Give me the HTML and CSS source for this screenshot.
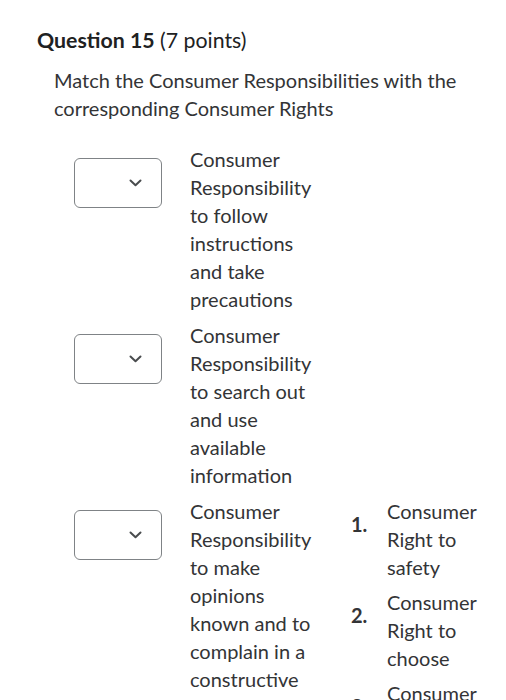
FILE: index.html
```html
<!DOCTYPE html>
<html lang="en">
<head>
<meta charset="utf-8">
<title>Question 15</title>
<link rel="stylesheet" href="styles.css">
</head>
<body>
<div class="page">
  <h2 class="title"><strong>Question 15</strong> (7 points)</h2>
  <p class="prompt">Match the Consumer Responsibilities with the corresponding Consumer Rights</p>
  <div class="match">
    <div class="row r1">
      <div class="select"><svg class="chev" width="13" height="8" viewBox="0 0 13 8"><path d="M1.5 1.5 L6.5 6.2 L11.5 1.5" fill="none" stroke="#494c4e" stroke-width="2" stroke-linecap="round" stroke-linejoin="round"/></svg></div>
      <div class="text">Consumer Responsibility to follow instructions and take precautions</div>
    </div>
    <div class="row r2">
      <div class="select"><svg class="chev" width="13" height="8" viewBox="0 0 13 8"><path d="M1.5 1.5 L6.5 6.2 L11.5 1.5" fill="none" stroke="#494c4e" stroke-width="2" stroke-linecap="round" stroke-linejoin="round"/></svg></div>
      <div class="text">Consumer Responsibility to search out and use available information</div>
    </div>
    <div class="row r3">
      <div class="select"><svg class="chev" width="13" height="8" viewBox="0 0 13 8"><path d="M1.5 1.5 L6.5 6.2 L11.5 1.5" fill="none" stroke="#494c4e" stroke-width="2" stroke-linecap="round" stroke-linejoin="round"/></svg></div>
      <div class="text">Consumer Responsibility to make opinions known and to complain in a constructive way</div>
    </div>
    <ol class="choices">
      <li><span class="num">1.</span><span class="ctext">Consumer Right to safety</span></li>
      <li><span class="num">2.</span><span class="ctext">Consumer Right to choose</span></li>
      <li><span class="num">3.</span><span class="ctext">Consumer Right to be informed</span></li>
      <li><span class="num">4.</span><span class="ctext">Consumer Right to be heard</span></li>
    </ol>
  </div>
</div>
</body>
</html>
```

FILE: styles.css
```css
html, body {
  margin: 0;
  padding: 0;
  background: #ffffff;
}
body {
  font-family: Lato, "Open Sans", sans-serif;
  color: #333436;
  overflow: hidden;
}
.page {
  padding: 25px 0 0 37px;
}
.title {
  margin: 0;
  font-size: 21.3px;
  line-height: 30px;
  font-weight: 400;
  color: #202122;
}
.title strong {
  font-weight: 700;
}
.prompt {
  margin: 11px 0 0 17px;
  font-size: 20px;
  line-height: 28px;
  width: 420px;
}
.match {
  display: grid;
  grid-template-columns: auto auto;
  column-gap: 33px;
  row-gap: 8px;
  margin: 23px 0 0 37px;
  align-items: start;
  justify-content: start;
}
.row {
  grid-column: 1;
  display: flex;
  align-items: flex-start;
  gap: 28px;
}
.r3 {
  grid-row: 3;
}
.select {
  box-sizing: border-box;
  width: 88px;
  height: 50px;
  margin-top: 13px;
  border: 1px solid #7f8386;
  border-radius: 6px;
  display: flex;
  align-items: center;
  justify-content: flex-end;
  padding-right: 19px;
}
.chev {
  display: block;
}
.text {
  width: 128px;
  font-size: 20px;
  line-height: 28px;
}
.choices {
  grid-column: 2;
  grid-row: 3;
  list-style: none;
  margin: 0;
  padding: 0;
  display: flex;
  flex-direction: column;
  gap: 7px;
}
.choices li {
  display: flex;
  align-items: flex-start;
  font-size: 20px;
  line-height: 28px;
}
.num {
  width: 36px;
  font-weight: 700;
  padding-top: 13px;
  line-height: 28px;
}
.ctext {
  width: 100px;
}
```
